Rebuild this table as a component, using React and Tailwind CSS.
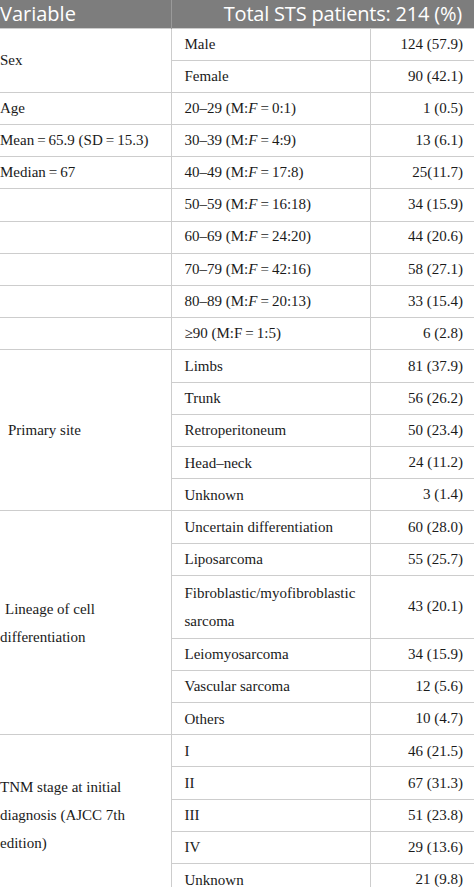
// App.jsx — STS patient characteristics table

const ageRows = [
  ["Age", "20–29 (M:", "F", "\u2009=\u20090:1)", "1 (0.5)"],
  ["Mean\u2009=\u200965.9 (SD\u2009=\u200915.3)", "30–39 (M:", "F", "\u2009=\u20094:9)", "13 (6.1)"],
  ["Median\u2009=\u200967", "40–49 (M:", "F", "\u2009=\u200917:8)", "25(11.7)"],
  ["", "50–59 (M:", "F", "\u2009=\u200916:18)", "34 (15.9)"],
  ["", "60–69 (M:", "F", "\u2009=\u200924:20)", "44 (20.6)"],
  ["", "70–79 (M:", "F", "\u2009=\u200942:16)", "58 (27.1)"],
  ["", "80–89 (M:", "F", "\u2009=\u200920:13)", "33 (15.4)"],
  ["", "≥90 (M:F\u2009=\u20091:5)", null, null, "6 (2.8)"],
];

const site = [
  ["Limbs", "81 (37.9)"],
  ["Trunk", "56 (26.2)"],
  ["Retroperitoneum", "50 (23.4)"],
  ["Head–neck", "24 (11.2)"],
  ["Unknown", "3 (1.4)"],
];

const lineage = [
  ["Uncertain differentiation", "60 (28.0)"],
  ["Liposarcoma", "55 (25.7)"],
  ["Fibroblastic/myofibroblastic sarcoma", "43 (20.1)"],
  ["Leiomyosarcoma", "34 (15.9)"],
  ["Vascular sarcoma", "12 (5.6)"],
  ["Others", "10 (4.7)"],
];

const tnm = [
  ["I", "46 (21.5)"],
  ["II", "67 (31.3)"],
  ["III", "51 (23.8)"],
  ["IV", "29 (13.6)"],
  ["Unknown", "21 (9.8)"],
];

const cell = "border border-[#cdcdcd] align-middle";
const rowH = "h-[32.2px]";

function Group({ label, rows, labelClass = "" }) {
  return rows.map(([name, value], i) => (
    <tr key={name + i} className={name.length > 28 ? "h-[63px]" : rowH}>
      {i === 0 && (
        <td rowSpan={rows.length} className={`${cell} border-l-0 pr-2 leading-[28px] ${labelClass}`}>
          {label}
        </td>
      )}
      <td className={`${cell} px-[13px] leading-[28px]`}>{name}</td>
      <td className={`${cell} border-r-0 pr-[11px] text-right`}>{value}</td>
    </tr>
  ));
}

export default function App() {
  return (
    <div className="w-[474px] h-[887px] overflow-hidden bg-white">
      <table
        className="w-[474px] border-collapse table-fixed text-[15px] text-[#1a1a1a]"
        style={{ fontFamily: '"Liberation Serif", "Times New Roman", serif' }}
      >
        <colgroup>
          <col className="w-[171px]" />
          <col className="w-[199px]" />
          <col className="w-[104px]" />
        </colgroup>
        <thead>
          <tr className="h-[28px] bg-[#7d7d7d] text-white text-[20px] font-normal font-['Open_Sans',sans-serif]">
            <th className="text-left font-normal pl-0 border-r border-[#9a9a9a] leading-none">Variable</th>
            <th colSpan={2} className="text-right font-normal pr-[12px] leading-none tracking-[-0.2px]">
              Total STS patients: 214 (%)
            </th>
          </tr>
        </thead>
        <tbody>
          <Group label="Sex" rows={[["Male", "124 (57.9)"], ["Female", "90 (42.1)"]]} />
          {ageRows.map(([label, pre, it, post, value], i) => (
            <tr key={i} className={rowH}>
              <td className={`${cell} border-l-0 pb-[1px]`}>{label}</td>
              <td className={`${cell} px-[13px] pb-[1px]`}>
                {pre}
                {it && <i>{it}</i>}
                {post}
              </td>
              <td className={`${cell} border-r-0 pr-[11px] pb-[1px] text-right`}>{value}</td>
            </tr>
          ))}
          <Group label="Primary site" rows={site} labelClass="pl-2" />
          <Group
            label={
              <>
                <span className="pl-[5px]">Lineage of cell</span>
                <br />
                differentiation
              </>
            }
            rows={lineage}
          />
          <Group label="TNM stage at initial diagnosis (AJCC 7th edition)" rows={tnm} />
        </tbody>
      </table>
    </div>
  );
}
